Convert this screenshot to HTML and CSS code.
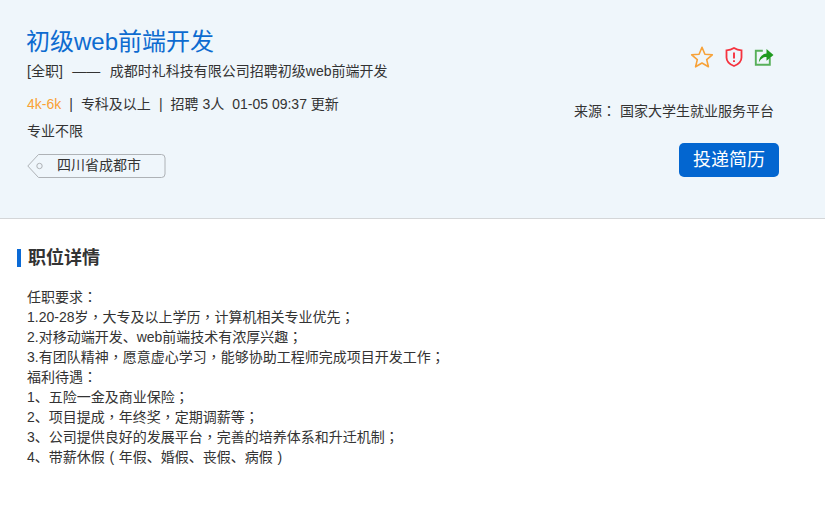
FILE: index.html
```html
<!DOCTYPE html>
<html lang="zh-CN">
<head>
<meta charset="utf-8">
<title>初级web前端开发</title>
<link rel="stylesheet" href="styles.css">
</head>
<body>
<header class="hero">
  <div class="hero-left">
    <h1 class="job-title">初级web前端开发</h1>
    <p class="job-sub"><span>[全职]</span><span class="dash">——</span><span>成都时礼科技有限公司招聘初级web前端开发</span></p>
    <p class="job-meta"><span class="salary">4k-6k</span><span class="sep">|</span><span>专科及以上</span><span class="sep">|</span><span>招聘 3人</span><span class="date">01-05 09:37 更新</span></p>
    <p class="job-major">专业不限</p>
    <div class="tag">
      <svg class="tag-shape" width="139" height="25" viewBox="0 0 139 25"><path d="M11.500 .5H134.500a3.500 3.500 0 0 1 3.500 3.500V20a3.500 3.500 0 0 1-3.500 3.500H11.500L.8 12Z" fill="none" stroke="#aeb2b6"/><circle cx="12.500" cy="12" r="2.700" fill="none" stroke="#aeb2b6"/></svg>
      <span class="tag-text">四川省成都市</span>
    </div>
  </div>
  <div class="hero-right">
    <div class="icons">
      <svg width="24" height="24" viewBox="0 0 24 24"><path d="M12 2.300l2.900 6.900 7.400.6-5.600 4.800 1.700 7.200L12 18l-6.400 3.800 1.700-7.200-5.600-4.800 7.400-.6Z" fill="none" stroke="#f7a239" stroke-width="1.600" stroke-linejoin="round"/></svg>
      <svg width="20" height="22" viewBox="0 0 20 22"><path d="M10 2c2.500 1.700 5 2.300 7.500 2.400v7c0 4-3.200 6.800-7.500 8.600-4.300-1.800-7.500-4.600-7.500-8.600v-7C5 4.300 7.500 3.700 10 2Z" fill="none" stroke="#f5333f" stroke-width="1.800"/><path d="M10 6.500v6M10 14.200v1.800" stroke="#f5333f" stroke-width="1.900"/></svg>
      <svg class="icon-share" width="20" height="20" viewBox="0 0 20 20"><path d="M15.800 10.500v7.300H1.800V3.800h7" fill="none" stroke="#58b05a" stroke-width="1.900"/><path d="M4.800 15.500c.2-5.300 3-8.500 7.700-8.900V2L19.500 8l-7 5.800V10c-3.300 0-6 1.900-7.700 5.500Z" fill="#1f9a1f"/></svg>
    </div>
    <p class="source">来源<span class="mark" lang="zh-TW">：</span> 国家大学生就业服务平台</p>
    <button class="apply" type="button">投递简历</button>
  </div>
</header>
<main class="details">
  <h2 class="section-title">职位详情</h2>
  <div class="desc">
    <p>任职要求<span class="mark" lang="zh-TW">：</span></p>
    <p>1.20-28岁<span class="mark" lang="zh-TW">，</span>大专及以上学历<span class="mark" lang="zh-TW">，</span>计算机相关专业优先<span class="mark" lang="zh-TW">；</span></p>
    <p>2.对移动端开发、web前端技术有浓厚兴趣<span class="mark" lang="zh-TW">；</span></p>
    <p>3.有团队精神<span class="mark" lang="zh-TW">，</span>愿意虚心学习<span class="mark" lang="zh-TW">，</span>能够协助工程师完成项目开发工作<span class="mark" lang="zh-TW">；</span></p>
    <p>福利待遇<span class="mark" lang="zh-TW">：</span></p>
    <p>1、五险一金及商业保险<span class="mark" lang="zh-TW">；</span></p>
    <p>2、项目提成<span class="mark" lang="zh-TW">，</span>年终奖<span class="mark" lang="zh-TW">，</span>定期调薪等<span class="mark" lang="zh-TW">；</span></p>
    <p>3、公司提供良好的发展平台<span class="mark" lang="zh-TW">，</span>完善的培养体系和升迁机制<span class="mark" lang="zh-TW">；</span></p>
    <p>4、带薪休假<span class="paren">(</span>年假、婚假、丧假、病假<span class="paren">)</span></p>
  </div>
</main>
</body>
</html>
```
FILE: styles.css
```css
* { box-sizing: border-box; }
html, body { margin: 0; padding: 0; }
body {
  width: 825px;
  height: 505px;
  overflow: hidden;
  background: #fff;
  color: #333;
  font-family: "Liberation Sans", "Noto Sans CJK SC", sans-serif;
  font-size: 14px;
}
p, h1, h2 { margin: 0; }
.mark {
  font-family: "Noto Sans CJK TC", sans-serif;
  line-height: 0;
}
.paren {
  display: inline-block;
  width: 14px;
  text-align: center;
}
.hero {
  height: 219px;
  background: #eff6fb;
  border-bottom: 1px solid #d4d6d8;
  padding: 26px 46px 0 27px;
  display: flex;
  justify-content: space-between;
}
.job-title {
  font-size: 24px;
  font-weight: 400;
  line-height: 32px;
  color: #0d6bd0;
  margin-left: -1px;
}
.job-sub {
  display: flex;
  gap: 9.500px;
  font-size: 14px;
  line-height: 20px;
  margin-top: 3px;
}
.job-meta {
  display: flex;
  font-size: 14px;
  line-height: 20px;
  margin-top: 13px;
}
.salary { color: #f9a235; }
.sep { margin: 0 8px; }
.date { margin-left: 8px; }
.job-major {
  line-height: 20px;
  margin-top: 7px;
}
.tag {
  position: relative;
  width: 139px;
  height: 25px;
  margin-top: 13px;
  padding-left: 30px;
  line-height: 23px;
}
.tag-shape { position: absolute; left: 0; top: 0; }
.tag-text { position: relative; }
.hero-right {
  display: flex;
  flex-direction: column;
  align-items: flex-end;
}
.icons {
  display: flex;
  align-items: center;
  gap: 10px;
  margin-top: 19px;
  margin-right: 5px;
  height: 24px;
}
.source {
  line-height: 20px;
  margin-top: 32px;
  margin-right: 5px;
}
.apply {
  width: 100px;
  height: 34px;
  margin-top: 22px;
  border: 0;
  border-radius: 5px;
  background: #0366d0;
  color: #fff;
  font: 18px/34px "Liberation Sans", "Noto Sans CJK SC", sans-serif;
  padding: 0;
}
.details { padding: 30px 0 0 17px; }
.section-title {
  border-left: 4px solid #0a6ad6;
  padding-left: 7px;
  font-size: 18px;
  font-weight: 700;
  line-height: 18px;
}
.desc {
  margin-top: 20px;
  padding-left: 10px;
  font-size: 14px;
  line-height: 20px;
}
```
